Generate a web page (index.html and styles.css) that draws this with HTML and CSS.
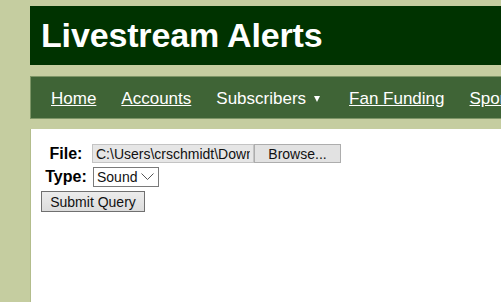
FILE: index.html
```html
<!DOCTYPE html>
<html lang="en">
<head>
    <meta charset="UTF-8">
    <title>Livestream Alerts</title>
    <link rel="stylesheet" href="styles.css">
</head>
<body>
    <div class="page">
        <div class="header">
            <h1>Livestream Alerts</h1>
        </div>

        <div class="nav">
            <a href="#">Home</a>
            <a href="#">Accounts</a>
            <span class="dropdown">Subscribers<span class="caret"></span></span>
            <a href="#">Fan Funding</a>
            <a href="#">Sponsors</a>
        </div>

        <div class="content">
            <form>
                <table class="upload">
                    <tr>
                        <th>File:</th>
                        <td>
                            <span class="file-input">
                                <input type="text" class="file-path" value="C:\Users\crschmidt\Downloads\alert.mp3" readonly>
                                <button type="button" class="browse">Browse...</button>
                            </span>
                        </td>
                    </tr>
                    <tr>
                        <th>Type:</th>
                        <td>
                            <span class="select">
                                Sound
                                <svg width="13" height="8" viewBox="0 0 13 8"><path d="M0.5 0.5 L6.5 6.5 L12.5 0.5" fill="none" stroke="#555" stroke-width="1"/></svg>
                            </span>
                        </td>
                    </tr>
                </table>
                <button type="submit" class="submit">Submit Query</button>
            </form>
        </div>
    </div>
</body>
</html>
```

FILE: styles.css
```css
html, body {
    margin: 0;
    padding: 0;
    height: 100%;
    overflow: hidden;
    background: #c5cda0;
    font-family: "Liberation Sans", Arial, sans-serif;
}

.page {
    width: 720px;
    padding: 6px 0 0 30px;
}

.header {
    background: #003300;
    height: 59px;
    padding-left: 11px;
    display: flex;
    align-items: center;
}

.header h1 {
    margin: 0;
    color: #fff;
    font-size: 34px;
    font-weight: bold;
    letter-spacing: -0.15px;
}

.nav {
    margin-top: 11px;
    height: 39px;
    padding-top: 2px;
    background: #3f6436;
    border: 1px solid #7d9566;
    display: flex;
    align-items: center;
    gap: 25px;
    padding-left: 20px;
    font-size: 17px;
    color: #fff;
}

.nav a {
    color: #fff;
}

.dropdown {
    display: flex;
    align-items: center;
}

.caret {
    margin-left: 8px;
    margin-right: 4px;
    width: 0;
    height: 0;
    border-left: 3.5px solid transparent;
    border-right: 3.5px solid transparent;
    border-top: 6px solid #fff;
}

.content {
    margin-top: 10px;
    background: #fff;
    border-left: 1px solid #b3bd8c;
    height: 200px;
    padding: 12px 9px;
}

form {
    margin: 0;
}

.upload {
    border-spacing: 2px;
    margin-left: 0;
}

.upload th {
    width: 46px;
    padding: 1px;
    text-align: center;
    font-size: 16px;
    font-weight: bold;
}

.upload td {
    padding: 1px 0;
}

.file-input {
    display: flex;
}

.file-path {
    box-sizing: border-box;
    width: 162px;
    height: 19px;
    margin: 0;
    padding: 0 3px;
    background: #e6e6e6;
    border: 1px solid #c4c4c4;
    font-family: "Liberation Sans", Arial, sans-serif;
    font-size: 14px;
    color: #111;
}

.browse {
    box-sizing: border-box;
    width: 87px;
    height: 19px;
    margin: 0;
    padding: 0;
    background: #e2e2e2;
    border: 1px solid #adadad;
    font-family: "Liberation Sans", Arial, sans-serif;
    font-size: 14px;
    color: #111;
}

.select {
    box-sizing: border-box;
    display: inline-flex;
    align-items: center;
    justify-content: space-between;
    width: 66px;
    height: 20px;
    margin-left: 1px;
    padding: 0 4px 0 3px;
    border: 1px solid #7a7a7a;
    font-size: 14px;
    color: #111;
}

.submit {
    box-sizing: border-box;
    display: block;
    width: 104px;
    height: 21px;
    margin: 1px 0 0 1px;
    padding: 0;
    background: linear-gradient(#ececec, #dcdcdc);
    border: 1px solid #707070;
    font-family: "Liberation Sans", Arial, sans-serif;
    font-size: 14px;
    color: #111;
}
```
